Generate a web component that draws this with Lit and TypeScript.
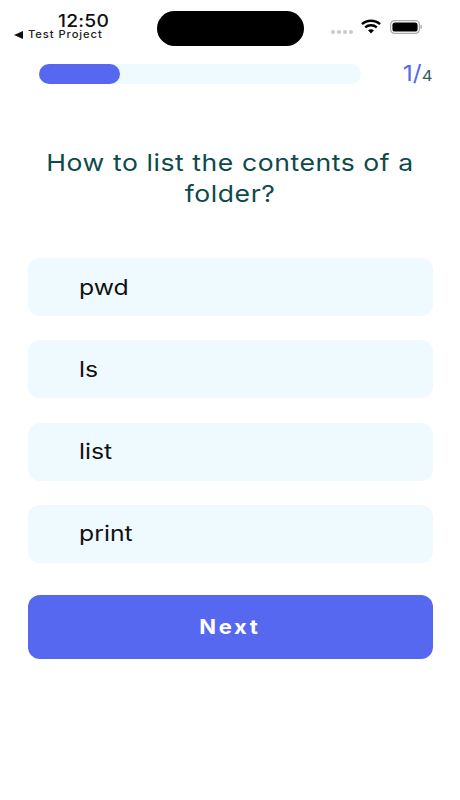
import { LitElement, html, css } from "lit";
import { customElement } from "lit/decorators.js";

@customElement("app-root")
export class AppRoot extends LitElement {
  static styles = css`
    :host { display: block; width: 460px; height: 800px; background: #fff; font-family: Inter, "Noto Sans", sans-serif; position: relative; overflow: hidden; }
    .status { height: 64px; box-sizing: border-box; display: flex; padding: 11px 0 0 14px; position: relative; }
    .left { width: 143px; height: 34px; margin-top: 1px; display: flex; flex-direction: column; flex: none; }
    .time { font-size: 17.5px; font-weight: 500; line-height: 17px; color: #111; margin-left: 44px; letter-spacing: 0.2px; transform: scaleX(1.1); transform-origin: left; white-space: nowrap; }
    .back { font-size: 11px; font-weight: 500; line-height: 11px; color: #222; letter-spacing: 0.9px; display: flex; align-items: center; gap: 5px; white-space: nowrap; }
    .back svg { flex: none; }
    .back span { display: inline-block; transform: scaleX(1.02); transform-origin: left; }
    .island { width: 146.5px; height: 35px; border-radius: 18px; background: #000; flex: none; }
    .right { display: flex; align-items: center; margin-left: 27px; height: 35px; }
    .dots { display: flex; gap: 2px; margin-top: 6px; }
    .dots i { width: 4px; height: 4px; border-radius: 50%; background: #c9c9c9; display: block; }
    .wifi { margin-left: 8px; margin-top: -4px; }
    .battery { margin-left: 9px; margin-top: -4px; }
    .progress-row { display: flex; align-items: center; padding: 0 27.5px 0 39px; height: 20px; }
    .track { width: 321.5px; height: 20px; border-radius: 10px; background: #eefaff; flex: none; }
    .fill { width: 81px; height: 20px; border-radius: 10px; background: #5768f0; }
    .count { margin-left: auto; color: #5768f0; font-size: 22px; line-height: 20px; display: flex; align-items: baseline; transform: scaleX(1.12); transform-origin: right; }
    .count span { font-size: 15px; color: #2e5e5e; }
    .q { margin: 63px 0 0; padding: 0 60px; text-align: center; font-size: 23.5px; font-weight: 400; line-height: 31px; color: #0d4a4a; letter-spacing: 0.5px; transform: scaleX(1.13); }
    .options { margin: 49px 27.5px 0; display: flex; flex-direction: column; gap: 24.3px; }
    .opt { height: 58px; border-radius: 12px; background: #eefaff; display: flex; align-items: center; padding-left: 51.5px; font-size: 21px; color: #111; }
    .opt span { display: inline-block; transform: scaleX(1.18); transform-origin: left; }
    .next { margin: 32px 27.5px 0; height: 64px; border-radius: 12px; background: #5768f0; color: #fff; display: flex; align-items: center; justify-content: center; font-size: 20px; font-weight: 700; letter-spacing: 2.4px; }
    .next span { display: inline-block; transform: scaleX(1.1); }
  `;

  render() {
    const options = ["pwd", "ls", "list", "print"];
    return html`
      <div class="status">
        <div class="left">
          <div class="time">12:50</div>
          <div class="back">
            <svg width="9" height="8" viewBox="0 0 9 8"><path d="M0 4 9 0V8Z" fill="#111"/></svg>
            <span>Test Project</span>
          </div>
        </div>
        <div class="island"></div>
        <div class="right">
          <div class="dots"><i></i><i></i><i></i><i></i></div>
          <svg class="wifi" width="20" height="15" viewBox="0 0 20 15">
            <path d="M1 5.2C6 .6 14 .6 19 5.2" fill="none" stroke="#000" stroke-width="2.4"/>
            <path d="M4.2 8.4C7.4 5.6 12.6 5.6 15.8 8.4" fill="none" stroke="#000" stroke-width="2.4"/>
            <path d="M7 11.2 10 14.5 13 11.2C11.2 9.8 8.8 9.8 7 11.2Z" fill="#000"/>
          </svg>
          <svg class="battery" width="32" height="14" viewBox="0 0 32 14">
            <rect x=".6" y=".6" width="28.8" height="12.8" rx="4" fill="none" stroke="#aaa" stroke-width="1.2"/>
            <rect x="2.4" y="2.4" width="25.2" height="9.2" rx="2.6" fill="#000"/>
            <rect x="30.4" y="5" width="1.4" height="4" rx=".7" fill="#aaa"/>
          </svg>
        </div>
      </div>
      <div class="progress-row">
        <div class="track"><div class="fill"></div></div>
        <div class="count">1/<span>4</span></div>
      </div>
      <h1 class="q">How to list the contents of a folder?</h1>
      <div class="options">
        ${options.map((o) => html`<div class="opt"><span>${o}</span></div>`)}
      </div>
      <div class="next"><span>Next</span></div>
    `;
  }
}
